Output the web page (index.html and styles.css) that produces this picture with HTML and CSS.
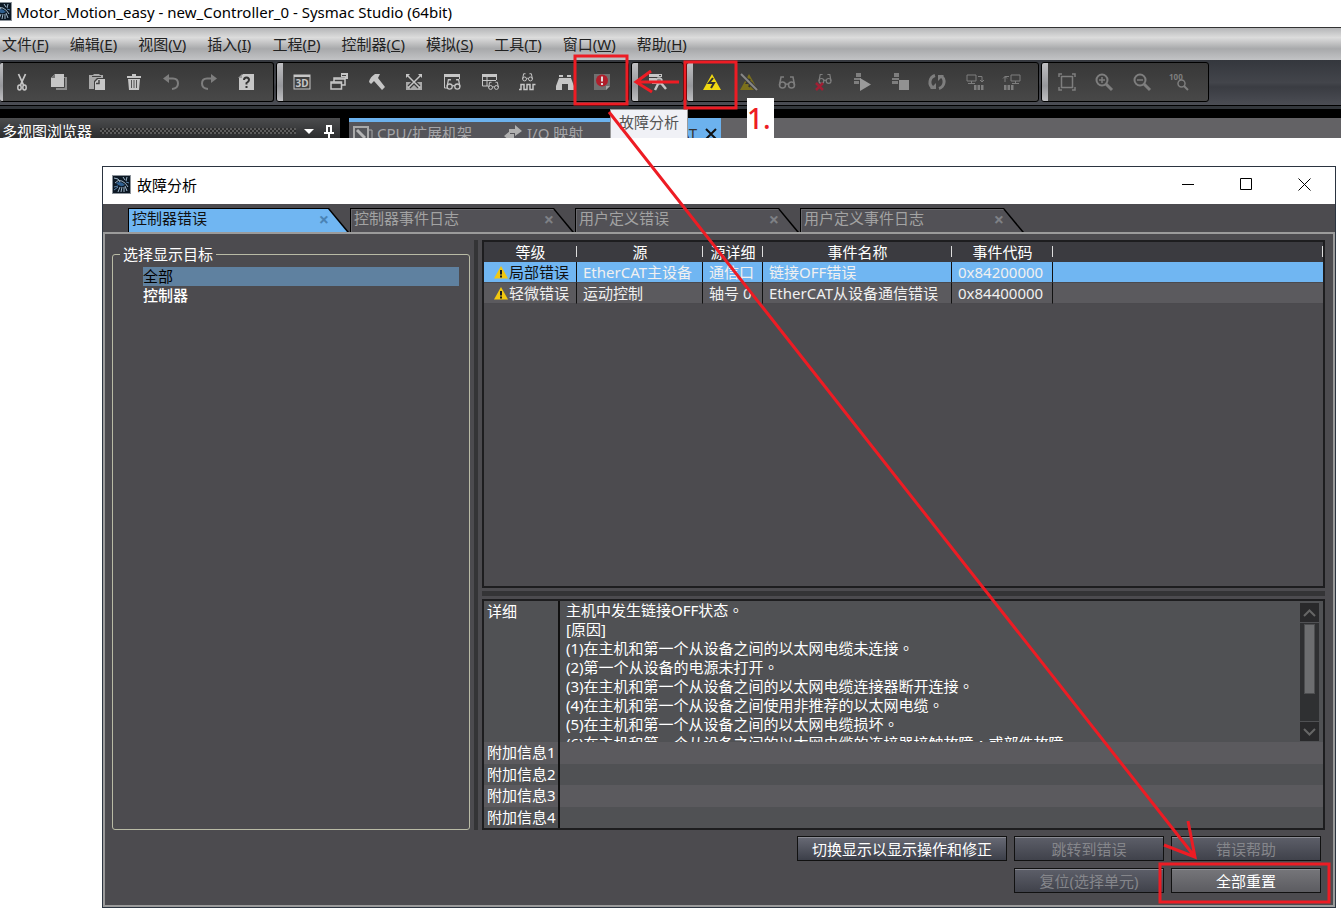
FILE: index.html
```
<!DOCTYPE html>
<html lang="zh-CN">
<head>
<meta charset="UTF-8">
<meta name="viewport" content="width=device-width, initial-scale=1.0">
<title>Motor_Motion_easy - new_Controller_0 - Sysmac Studio (64bit)</title>
<link rel="stylesheet" href="styles.css">
</head>
<body>

<svg class="defs" aria-hidden="true">
  <symbol id="app" viewBox="0 0 19 19">
    <rect width="19" height="19" fill="#8d949b"/>
    <rect x="1" y="1" width="17" height="17" fill="#0c1824"/>
    <path d="M2 3l4 1 2 3M3 8q3-4 7-2t6 6M6 17l2-5M9 17l1-5M12 17l0-5M15 16l-2-5M11 2l2 3M15 2l-1 4" stroke="#9fb6c9" fill="none"/>
    <path d="M4 8q5-3 9 2q-5 3-9-2z" fill="#2f5f8f"/>
    <path d="M2 12l4-1M2 15l4-3M14 7l3 1" stroke="#5d86ad"/>
  </symbol>
  <symbol id="glasses" viewBox="0 0 20 14">
    <g fill="none" stroke="currentColor" stroke-width="1.5">
      <circle cx="5.500" cy="10" r="3"/><circle cx="14.500" cy="10" r="3"/>
      <path d="M8.500 9.500q1.500-1 3 0M2.500 10L4 2h3M17.500 10L16 2h-3"/>
    </g>
  </symbol>
  <symbol id="warn" viewBox="0 0 14 13">
    <path d="M7 0l7 12.500H0z" fill="#f2c80f"/>
    <path d="M7 4v4.500M7 9.500v2" stroke="#1c1c1c" stroke-width="2"/>
  </symbol>
</svg>

<div class="main-window">
  <header class="titlebar">
    <svg class="title-icon" viewBox="7 0 12 19"><use href="#app" width="19" height="19"/></svg>
    <h1>Motor_Motion_easy - new_Controller_0 - Sysmac Studio (64bit)</h1>
  </header>

  <nav class="menubar">
    <a href="#">文件(<u>F</u>)</a>
    <a href="#">编辑(<u>E</u>)</a>
    <a href="#">视图(<u>V</u>)</a>
    <a href="#">插入(<u>I</u>)</a>
    <a href="#">工程(<u>P</u>)</a>
    <a href="#">控制器(<u>C</u>)</a>
    <a href="#">模拟(<u>S</u>)</a>
    <a href="#">工具(<u>T</u>)</a>
    <a href="#">窗口(<u>W</u>)</a>
    <a href="#">帮助(<u>H</u>)</a>
  </nav>

  <div class="toolbar">
    <div class="group edit">
      <div class="tools">
        <button aria-label="剪切"><svg viewBox="0 0 20 20"><path d="M6.500 2l5 11M13.500 2l-5 11" stroke="currentColor" stroke-width="1.800"/><g fill="none" stroke="currentColor" stroke-width="1.500"><ellipse cx="7.500" cy="15.500" rx="1.700" ry="2.500"/><ellipse cx="12.500" cy="15.500" rx="1.700" ry="2.500"/></g></svg></button>
        <button aria-label="复制"><svg viewBox="0 0 20 20"><path d="M7 5h11v13H7z" fill="#8c8c8c"/><path d="M6 2h9v13H2V6z" fill="currentColor"/><path d="M2 6l4-4v4z" fill="#777"/><path d="M15.500 6v9.500H6" stroke="#444" fill="none"/></svg></button>
        <button aria-label="粘贴"><svg viewBox="0 0 20 20"><path d="M2 3h4l1-1h5l1 1h3v3h-6L7 9v8H2z" fill="#a9a9a9"/><path d="M5 4.500h9" stroke="#444"/><path d="M11 7h7v11H8v-8z" fill="currentColor"/><path d="M9 11.500h3V8" stroke="#444" stroke-width="1.500" fill="none"/></svg></button>
        <button aria-label="删除"><svg viewBox="0 0 20 20"><path d="M3 4h5V2h4v2h5v2H3zM4 7h12l-1 11H5z" fill="currentColor"/><path d="M7.500 8v8M10 8v8M12.500 8v8" stroke="#555"/></svg></button>
        <button class="dim" aria-label="撤消"><svg viewBox="0 0 20 20"><path d="M2 6.500L8 2v9z" fill="currentColor"/><path d="M7 6.500h5q5 0 5 5t-6 5.500" stroke="currentColor" stroke-width="2" fill="none"/></svg></button>
        <button class="dim" aria-label="重做"><svg viewBox="0 0 20 20"><path d="M18 6.500L12 2v9z" fill="currentColor"/><path d="M13 6.500H8q-5 0-5 5t6 5.500" stroke="currentColor" stroke-width="2" fill="none"/></svg></button>
        <button aria-label="帮助"><svg viewBox="0 0 20 20"><path d="M7 2h11v16H3V6z" fill="currentColor"/><path d="M2 6l4-4v4z" fill="#999"/><path d="M8 8q0-2.500 2.500-2.500T13 8q0 1.500-2.500 3v1.500M10.500 14v2" stroke="#333" stroke-width="2" fill="none"/></svg></button>
      </div>
    </div>
    <div class="group view">
      <div class="tools">
        <button aria-label="3D"><svg viewBox="0 0 20 20"><rect x="2" y="3" width="16" height="14" fill="none" stroke="currentColor"/><path d="M2 4h16" stroke="currentColor" stroke-width="2"/><text x="10" y="15" text-anchor="middle" class="icon-text">3D</text></svg></button>
        <button aria-label="窗口"><svg viewBox="0 0 20 20"><path d="M12 1h7v6h-3V5h-4z" fill="currentColor"/><g fill="#3d3d3d" stroke="currentColor" stroke-width="1.500"><path d="M5 6h11v7H5z"/><path d="M2 10h10.500v7H2z"/></g><path d="M5 7h11M2 11h10" stroke="currentColor" stroke-width="1.500"/><path d="M13 3.500h4" stroke="#444"/></svg></button>
        <button aria-label="编译"><svg viewBox="0 0 20 20"><path d="M2 10q1-5 6-8h5l-2 4 7 9-3 3-8-9-3 3z" fill="currentColor"/></svg></button>
        <button aria-label="重新编译"><svg viewBox="0 0 20 20"><path d="M2 10h6l2 2 2-2h6v8H2z" fill="#a9a9a9"/><path d="M4 4l11 11M16 4L5 15" stroke="#3d3d3d" stroke-width="4"/><path d="M3 3l13 13M17 3L4 16" stroke="currentColor" stroke-width="1.500"/><path d="M2 2h4L2 6zM18 2h-4l4 4z" fill="currentColor"/></svg></button>
        <button aria-label="监视"><svg viewBox="0 0 20 20"><path d="M2 3.500h16" stroke="currentColor" stroke-width="3"/><path d="M2.500 4v12H5M17.500 4v3" stroke="currentColor" fill="none"/><use href="#glasses" x="3" y="6" width="17" height="12"/></svg></button>
        <button aria-label="监视表"><svg viewBox="0 0 20 20"><path d="M2 3.500h15" stroke="currentColor" stroke-width="3"/><path d="M2.500 4v10H8M7 5v9M2 8.500h14M16.500 4v4" stroke="currentColor" fill="none"/><use href="#glasses" x="7" y="8" width="13" height="11"/></svg></button>
        <button aria-label="数据跟踪"><svg viewBox="0 0 20 20"><use href="#glasses" x="4" y="0" width="13" height="10"/><path d="M2 17.500h2v-5h3v5h3v-5h3v5h3v-5h2.500" stroke="currentColor" stroke-width="1.500" fill="none"/></svg></button>
        <button aria-label="查找"><svg viewBox="0 0 20 20"><path d="M4 3h4v3h4V3h4v3l3 8v4h-6v-6H7v6H1v-4l3-8z" fill="currentColor"/><path d="M4 5.500h12" stroke="#444"/></svg></button>
        <button aria-label="故障分析"><svg viewBox="0 0 20 20"><path d="M2 2h16v12l-4 4H2z" fill="#707070"/><path d="M18 14l-4 4v-4z" fill="#a5a5a5"/><circle cx="10" cy="8.500" r="6" fill="#b01e2b"/><path d="M10 4.500v5M10 11v2" stroke="#ddd" stroke-width="2"/></svg></button>
      </div>
    </div>
    <div class="group single">
      <div class="tools">
        <button aria-label="搜索工具"><svg viewBox="0 0 20 20"><path d="M2 3.500h13M2 7.500h7" stroke="currentColor" stroke-width="3"/><path d="M12 3.500h2" stroke="#444"/><path d="M5 11h4" stroke="currentColor" stroke-width="2"/><circle cx="12" cy="9" r="3" fill="#888" stroke="currentColor" stroke-width="1.500"/><path d="M14 11l5 6M11 12l-3 6" stroke="currentColor" stroke-width="2.500"/></svg></button>
      </div>
    </div>
    <div class="group view">
      <div class="tools">
        <button aria-label="在线"><svg viewBox="0 0 20 20"><path d="M10 2l9 16H1z" fill="#f0d911"/><path d="M11 6l-4 5h5l-3 5" stroke="#333" stroke-width="2" fill="none"/></svg></button>
        <button aria-label="离线"><svg viewBox="0 0 20 20"><path d="M10 2l9 16H1z" fill="#7b701c"/><path d="M11 7l-3 4h4l-2 4" stroke="#333" stroke-width="2" fill="none"/><path d="M2 2l16 16" stroke="#3d3d3d" stroke-width="4"/><path d="M2 2l16 16" stroke="#888" stroke-width="2"/></svg></button>
        <button class="dim" aria-label="开始监视"><svg viewBox="0 0 20 20"><use href="#glasses" x="0" y="3" width="20" height="14"/></svg></button>
        <button class="dim" aria-label="停止监视"><svg viewBox="0 0 20 20"><use href="#glasses" x="3" y="0" width="16" height="13"/><path d="M2 11l7 7M9 11l-7 7" stroke="#a01f34" stroke-width="2.500"/></svg></button>
        <button class="dim" aria-label="运行"><svg viewBox="0 0 20 20"><path d="M4 1h5v4H4zM2 6h7v2H2zM2 9h5v3H2z" fill="currentColor"/><path d="M8 6l11 6.500L8 19z" fill="#9a9a9a"/></svg></button>
        <button class="dim" aria-label="停止"><svg viewBox="0 0 20 20"><path d="M4 1h5v4H4zM2 6h7v2H2zM2 9h6v3H2z" fill="currentColor"/><path d="M9 8h10v10H9z" fill="#929292"/></svg></button>
        <button class="dim" aria-label="同步"><svg viewBox="0 0 20 20"><path d="M8 3.500a7 7 0 0 0-2 12.500M12 16.500A7 7 0 0 0 14 4" stroke="currentColor" stroke-width="3" fill="none"/><path d="M3 17l6-6v6zM17 3l-6 6V3z" fill="currentColor"/></svg></button>
        <button class="dim" aria-label="从控制器传送"><svg viewBox="0 0 20 20"><path d="M2 3h9v6H2zM6.500 9v2M3 11.500h7M13 4.500h4V10M15 8l2 2 2-2" stroke="currentColor" fill="none"/><path d="M9 13h2.500v5H9zM12.500 13H15v5h-2.500zM16 13h2.500v5H16z" fill="currentColor"/></svg></button>
        <button class="dim" aria-label="传送到控制器"><svg viewBox="0 0 20 20"><path d="M9 3h9v6H9zM13.500 9v2M10 11.500h7M7 4.500H3V10M1 6.500l2-2 2 2" stroke="currentColor" fill="none"/><path d="M2 13h2.500v5H2zM5.500 13H8v5H5.500zM9 13h2.500v5H9z" fill="currentColor"/></svg></button>
      </div>
    </div>
    <div class="group zoom">
      <div class="tools">
        <button class="dim" aria-label="适合窗口"><svg viewBox="0 0 20 20"><path d="M4.500 4.500h11v11h-11zM2 5V2h3M15 2h3v3M18 15v3h-3M5 18H2v-3" stroke="currentColor" stroke-width="1.500" fill="none"/></svg></button>
        <button class="dim" aria-label="放大"><svg viewBox="0 0 20 20"><circle cx="8" cy="8" r="5.500" stroke="currentColor" stroke-width="2" fill="none"/><path d="M8 5v6M5 8h6" stroke="currentColor" stroke-width="1.500"/><path d="M12 12l6 6" stroke="currentColor" stroke-width="3"/></svg></button>
        <button class="dim" aria-label="缩小"><svg viewBox="0 0 20 20"><circle cx="8" cy="8" r="5.500" stroke="currentColor" stroke-width="2" fill="none"/><path d="M5 8h6" stroke="currentColor" stroke-width="1.500"/><path d="M12 12l6 6" stroke="currentColor" stroke-width="3"/></svg></button>
        <button class="dim" aria-label="100%"><svg viewBox="0 0 20 20"><text x="0" y="8" class="icon-text small">100</text><circle cx="12.500" cy="11.500" r="3.500" stroke="currentColor" stroke-width="1.500" fill="#3f3f3f"/><path d="M15 14l4 4" stroke="currentColor" stroke-width="2"/></svg></button>
      </div>
    </div>
  </div>

  <div class="dock">
    <div class="explorer">
      <span>多视图浏览器</span>
      <i class="grip"></i>
      <svg width="10" height="5"><path d="M0 0h10L5 5z" fill="#fff"/></svg>
      <svg class="pin" width="10" height="13"><path d="M3 0v8M7 0v8M3 1h4M0 8h10M5 8v5" stroke="#fff" stroke-width="2" fill="none"/></svg>
    </div>
    <div class="doc-tabs">
      <a href="#" class="cpu"><svg width="20" height="16"><path d="M1 2h14v12H1z" fill="#55565a" stroke="#a9a9a9" stroke-width="2"/><path d="M4 5l8 8" stroke="#b5b5b5" stroke-width="3"/><path d="M16 5h3v9h-3" stroke="#a9a9a9" fill="none"/></svg>CPU/扩展机架</a>
      <a href="#"><svg width="20" height="16"><path d="M6 4h6V0l7 6-7 5V8H6zM1 11l6-5v3h4v4H7v3z" fill="#b0b0b0"/></svg>I/O 映射</a>
      <a href="#" class="active">EtherCAT<svg width="12" height="12"><path d="M1 1l10 10M11 1L1 11" stroke="#111" stroke-width="2"/></svg></a>
    </div>
  </div>
</div>

<div class="dialog">
  <header class="dialog-title">
    <svg width="19" height="19"><use href="#app"/></svg>
    <h2>故障分析</h2>
    <div class="win-buttons">
      <button aria-label="最小化"><svg width="13" height="13"><path d="M0 6.500h12" stroke="#000"/></svg></button>
      <button aria-label="最大化"><svg width="13" height="13"><path d="M.5.500h11v11H.5z" fill="none" stroke="#000"/></svg></button>
      <button aria-label="关闭"><svg width="13" height="13"><path d="M.5.500l12 12M12.500.500l-12 12" stroke="#000"/></svg></button>
    </div>
  </header>

  <nav class="tabs">
    <button class="tab active"><span>控制器错误</span><b>×</b></button>
    <button class="tab"><span>控制器事件日志</span><b>×</b></button>
    <button class="tab"><span>用户定义错误</span><b>×</b></button>
    <button class="tab"><span>用户定义事件日志</span><b>×</b></button>
  </nav>

  <main class="content">
    <fieldset class="targets">
      <legend>选择显示目标</legend>
      <ul>
        <li class="selected">全部</li>
        <li>控制器</li>
      </ul>
    </fieldset>
    <div class="splitter"></div>
    <div class="results">
      <div class="events">
        <table>
          <colgroup><col class="c-level"><col class="c-source"><col class="c-part"><col class="c-name"><col class="c-code"><col></colgroup>
          <thead>
            <tr><th>等级</th><th>源</th><th>源详细</th><th>事件名称</th><th>事件代码</th><th></th></tr>
          </thead>
          <tbody>
            <tr class="selected"><td><svg width="14" height="13"><use href="#warn"/></svg>局部错误</td><td>EtherCAT主设备</td><td>通信口</td><td>链接OFF错误</td><td>0x84200000</td><td></td></tr>
            <tr><td><svg width="14" height="13"><use href="#warn"/></svg>轻微错误</td><td>运动控制</td><td>轴号 0</td><td>EtherCAT从设备通信错误</td><td>0x84400000</td><td></td></tr>
          </tbody>
        </table>
      </div>
      <div class="splitter-h"></div>
      <table class="details">
        <tr class="long">
          <th>详细</th>
          <td>
            <div class="detail-box">
              <div class="detail-text" lang="zh-TW">
                <p>主机中发生链接OFF状态。</p>
                <p>[原因]</p>
                <p>(1)在主机和第一个从设备之间的以太网电缆未连接。</p>
                <p>(2)第一个从设备的电源未打开。</p>
                <p>(3)在主机和第一个从设备之间的以太网电缆连接器断开连接。</p>
                <p>(4)在主机和第一个从设备之间使用非推荐的以太网电缆。</p>
                <p>(5)在主机和第一个从设备之间的以太网电缆损坏。</p>
                <p>(6)在主机和第一个从设备之间的以太网电缆的连接器接触故障，或部件故障</p>
              </div>
              <div class="scrollbar">
                <button aria-label="向上滚动"><svg width="13" height="8"><path d="M1 7l5.500-5.500L12 7" stroke="#666" stroke-width="2" fill="none"/></svg></button>
                <div class="track"><div class="thumb"></div></div>
                <button aria-label="向下滚动"><svg width="13" height="8"><path d="M1 1l5.500 5.500L12 1" stroke="#666" stroke-width="2" fill="none"/></svg></button>
              </div>
            </div>
          </td>
        </tr>
        <tr><th>附加信息1</th><td></td></tr>
        <tr><th>附加信息2</th><td></td></tr>
        <tr><th>附加信息3</th><td></td></tr>
        <tr><th>附加信息4</th><td></td></tr>
      </table>
    </div>
    <div class="actions">
      <button class="wide">切换显示以显示操作和修正</button>
      <button disabled>跳转到错误</button>
      <button disabled>错误帮助</button>
      <button class="second" disabled>复位(选择单元)</button>
      <button class="reset">全部重置</button>
    </div>
  </main>
</div>

<div class="tooltip">故障分析</div>
<div class="step">1.</div>

<!-- red pen marks -->
<svg class="marks" width="1341" height="910" aria-hidden="true">
  <g fill="none" stroke="#ed1c24" stroke-width="3">
    <rect x="575" y="56" width="52" height="48"/>
    <rect x="685" y="62" width="51" height="46"/>
    <path d="M679 82h-43M651 71l-15 11 16 10"/>
    <path d="M609 112L1195 857M1164 845l31 12-7-36"/>
    <rect x="1160" y="864" width="169" height="38"/>
  </g>
</svg>

</body>
</html>
```

FILE: styles.css
```
* {
  box-sizing: border-box;
}
body {
  margin: 0;
  min-height: 100vh;
  display: flex;
  flex-direction: column;
  position: relative;
  background: #fff;
  color: #fff;
  font-family: "Noto Sans", "Noto Sans CJK SC", sans-serif;
  font-size: 15px;
  line-height: 20px;
}
button {
  font: inherit;
  color: inherit;
  padding: 0;
  border: 0;
  background: none;
}
h1, h2, p, ul {
  margin: 0;
  padding: 0;
  font-size: 15px;
  font-weight: normal;
}
a {
  text-decoration: none;
}
svg {
  display: block;
  flex: none;
}
.defs {
  position: absolute;
  width: 0;
  height: 0;
}

/* main window */
.main-window {
  background: #000;
}
.titlebar {
  height: 27px;
  display: flex;
  align-items: center;
  gap: 4px;
  padding-bottom: 4px;
  background: #fff;
  color: #000;
}
.title-icon {
  width: 12px;
  height: 19px;
}
.menubar {
  display: flex;
  align-items: center;
  gap: 21px;
  height: 33px;
  padding-left: 2px;
  border-top: 1px solid #333;
  background: linear-gradient(#b5b6b8, #dcdcdc 30%, #a8a9ab 65%, #c2c3c5);
}
.menubar a {
  color: #222;
  white-space: nowrap;
}
.toolbar {
  display: flex;
  gap: 2px;
  padding: 2px 0 3px;
  border-bottom: 1px solid #000;
  background: linear-gradient(#34373d, #43454b 50%, #3a3c42 60%, #4b4d54);
}
.group {
  display: flex;
  height: 40px;
  border: 1px solid #000;
  border-radius: 3px;
  background: linear-gradient(#383838, #484848);
}
.group::before {
  content: "";
  width: 6px;
  border-radius: 2px 0 0 2px;
  background: linear-gradient(#bfbfc2, #97989c 60%, #bfbfc2);
}
.group.edit::before {
  width: 3px;
}
.tools {
  display: grid;
  grid-auto-flow: column;
  grid-auto-columns: 1fr;
}
.edit { width: 274px; border-left: 0; }
.view { width: 353px; }
.single { width: 53px; }
.zoom { width: 168px; }
.edit .tools { width: 262px; }
.view .tools { width: 338px; }
.single .tools { width: 38px; }
.zoom .tools { width: 150px; }
.tools button {
  display: grid;
  place-items: center;
  color: #c6c6c6;
}
.tools .dim {
  color: #7e7e7e;
}
.tools svg {
  width: 20px;
  height: 20px;
}
.icon-text {
  font-size: 10px;
  font-weight: bold;
  fill: currentColor;
}
.icon-text.small {
  font-size: 8px;
}

.dock {
  display: flex;
  gap: 9px;
  height: 32px;
  border-top: 3px solid #33373c;
  padding-top: 9px;
  overflow: hidden;
}
.explorer {
  display: flex;
  align-items: center;
  width: 340px;
  height: 26px;
  padding: 0 6px 0 2px;
  background: linear-gradient(#4b4c4e, #232425);
}
.grip {
  flex: 1;
  height: 6px;
  margin: 0 8px;
  background: repeating-conic-gradient(#5d5d5d 0 25%, #2c2c2c 0 50%) 0 0 / 4px 4px;
}
.pin {
  margin-left: 10px;
}
.doc-tabs {
  flex: 1;
  display: flex;
  background: #636265;
}
.doc-tabs a {
  display: flex;
  gap: 4px;
  width: 150px;
  height: 29px;
  padding: 1px 4px 0;
  border-top: 4px solid #6cb2ee;
  background: #55555a;
  color: #a5a5a8;
  white-space: nowrap;
}
.doc-tabs a + a {
  width: 111px;
}
.doc-tabs svg {
  margin-top: 2px;
}
.doc-tabs .active {
  justify-content: flex-end;
  align-items: flex-start;
  gap: 8px;
  background: #6cb2ee;
  color: #333;
}
.doc-tabs .active svg {
  margin-top: 5px;
}

.tooltip {
  position: absolute;
  left: 610px;
  top: 109px;
  height: 29px;
  padding: 2px 8px;
  border: 1px solid #999;
  border-bottom: 0;
  background: #f0f1f6;
  color: #555;
}
.step {
  position: absolute;
  left: 747px;
  top: 98px;
  width: 27px;
  height: 40px;
  background: #fff;
  color: #ed1c24;
  font-size: 28px;
  font-weight: 500;
  line-height: 40px;
}
.marks {
  position: absolute;
  left: 0;
  top: 0;
  pointer-events: none;
}

/* fault analysis dialog */
.dialog {
  flex: 1;
  display: flex;
  flex-direction: column;
  margin: 28px 5px 2px 102px;
  border: 1px solid #2b3440;
  background: #4c4b4f;
}
.dialog-title {
  display: flex;
  align-items: center;
  gap: 6px;
  height: 37px;
  padding: 0 2px 2px 9px;
  background: #fff;
  color: #000;
}
.win-buttons {
  display: flex;
  margin-left: auto;
}
.win-buttons button {
  display: grid;
  place-items: center;
  width: 58px;
  height: 36px;
}
.tabs {
  display: flex;
  gap: 1px;
  padding: 4px 0 0 25px;
}
.tab {
  position: relative;
  display: flex;
  justify-content: space-between;
  width: 224px;
  height: 24px;
  padding: 0 20px 0 4px;
  background: #000;
  clip-path: polygon(0 0, calc(100% - 20px) 0, 100% 100%, 0 100%);
  color: #a3a3a3;
}
.tab::before {
  content: "";
  position: absolute;
  inset: 1px 2px 0 1px;
  border-top: 1px solid #68686c;
  border-left: 1px solid #68686c;
  background: #525156;
  clip-path: polygon(0 0, calc(100% - 19px) 0, 100% 100%, 0 100%);
}
.tab.active {
  width: 221px;
  color: #111;
}
.tab.active::before {
  border: 0;
  background: #70b6f2;
}
.tab span, .tab b {
  position: relative;
}
.tab b {
  color: #7e8085;
  font-size: 18px;
  line-height: 22px;
}
.tab.active b {
  color: #4a83b5;
}

.content {
  flex: 1;
  display: grid;
  grid-template-columns: 358px 4px 1fr;
  grid-template-rows: 1fr auto;
  column-gap: 4px;
  padding: 6px 8px 12px 7px;
  border: 2px solid #9b9b9b;
}
.targets {
  margin: 4px 0 0;
  min-width: 0;
  padding: 3px 10px 0 30px;
  border: 1px solid #b9bba5;
  border-radius: 3px;
}
.targets legend {
  margin-left: -23px;
  padding: 0 3px;
}
.targets ul {
  list-style: none;
}
.targets li {
  line-height: 19px;
  font-weight: 500;
}
.targets .selected {
  font-weight: normal;
  background: #5f81a0;
  color: #000;
}
.splitter, .splitter-h {
  background: #343436;
}
.results {
  display: flex;
  flex-direction: column;
  min-width: 0;
}
.splitter-h {
  height: 5px;
  margin: 3px 0;
}
.events {
  flex: 1;
  border: 2px solid #1d1d1f;
}
table {
  width: 100%;
  border-spacing: 0;
  table-layout: fixed;
}
.c-level { width: 93px; }
.c-source { width: 126px; }
.c-part { width: 60px; }
.c-name { width: 189px; }
.c-code { width: 101px; }
.events th {
  height: 20px;
  padding: 0;
  background: linear-gradient(#ddd, #ddd) right 0 top 4px / 1px 11px no-repeat #3b3b40;
  font-weight: normal;
}
.events td {
  height: 21px;
  padding: 0 6px;
  border-right: 1px solid #111;
  border-bottom: 1px solid #4b4a4e;
  background: #5b5a5e;
  color: #f0f0f0;
  white-space: nowrap;
}
.events td:first-child {
  padding: 0 0 0 10px;
}
.events td:last-child {
  border-right: 0;
}
.events td svg {
  display: inline-block;
  margin-right: 1px;
  vertical-align: -1px;
}
.events .selected td {
  background: #70b6f2;
}
.events .selected td:first-child {
  color: #111;
}

.details {
  border: 2px solid #1d1d1f;
}
.details th, .details td {
  padding: 0;
  height: 21px;
  background: #505154;
  font-weight: normal;
  text-align: left;
  vertical-align: top;
}
.details th {
  width: 76px;
  padding-left: 3px;
  border-right: 2px solid #111;
  white-space: nowrap;
}
.details tr:nth-child(even) > * {
  height: 22px;
  background: #5b5a5e;
}
.detail-box {
  display: flex;
  height: 141px;
  padding-right: 4px;
  overflow: hidden;
}
.detail-text {
  flex: 1;
  padding: 0 6px;
  line-height: 19px;
  font-family: "Noto Sans", "Noto Sans CJK TC", sans-serif;
  overflow: hidden;
}
.scrollbar {
  display: flex;
  flex-direction: column;
  gap: 1px;
  width: 19px;
  height: 138px;
  margin-top: 2px;
}
.scrollbar button {
  display: grid;
  place-items: center;
  height: 19px;
  background: #29292b;
}
.track {
  flex: 1;
  padding: 1px 4px;
  background: #2f3032;
}
.thumb {
  height: 70px;
  background: #6d6e70;
  border: 1px solid #4d4e50;
}

.actions {
  grid-column: 1 / -1;
  display: grid;
  grid-template-columns: 210px 150px 150px;
  justify-content: end;
  gap: 7px;
  padding: 6px 4px 0 0;
}
.actions button {
  height: 25px;
  border: 1px solid #111;
  background: linear-gradient(#686a75, #3c3f49);
  box-shadow: inset 0 1px #8b8c94;
  color: #fff;
}
.actions button:disabled {
  background: linear-gradient(#5d5f69, #40424b);
  color: #85868b;
}
.actions .second {
  grid-column: 2;
}
.actions .reset {
  background: linear-gradient(#76767a, #5c5c61);
}
```
